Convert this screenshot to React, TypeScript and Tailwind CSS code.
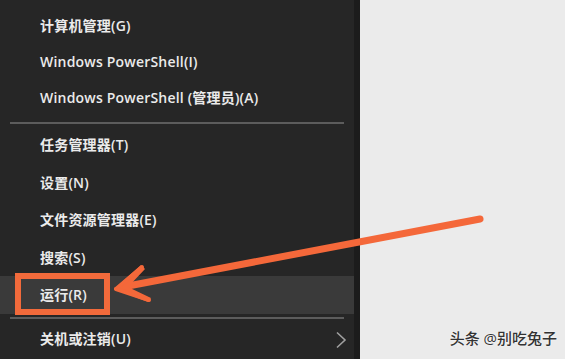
import React from 'react'

const font = { fontFamily: '"Open Sans", "Noto Sans CJK SC", sans-serif' }

function Item({ label, active = false, h = 'h-[37.5px]' }: { label: string; active?: boolean; h?: string }) {
  return (
    <div className={`flex items-center pl-10 text-[14px] font-semibold tracking-[0.2px] text-[#ebebeb] ${h} ${active ? 'bg-[#3a3a3a]' : ''}`}>
      {label}
    </div>
  )
}

function Divider({ className = '' }: { className?: string }) {
  return <div className={`mx-[10px] h-[2px] bg-[#5c5c5c] ${className}`} />
}

export default function App() {
  return (
    <div className="relative flex h-[359px] w-[565px] overflow-hidden bg-[#ebebeb]" style={font}>
      {/* context menu */}
      <div className="flex w-[360px] flex-col border-r-[6px] border-[#1c1c1c] bg-[#262626] pt-[7px]">
        <Item label="计算机管理(G)" h="h-[36px]" />
        <Item label="Windows PowerShell(I)" h="h-[36px]" />
        <Item label="Windows PowerShell (管理员)(A)" h="h-[36px]" />
        <Divider className="mt-[7px]" />
        <div className="mt-[2px]">
          <Item label="任务管理器(T)" />
          <Item label="设置(N)" />
          <Item label="文件资源管理器(E)" />
          <Item label="搜索(S)" />
          <Item label="运行(R)" active />
        </div>
        <Divider className="mt-[3px]" />
        <div className="relative">
          <Item label="关机或注销(U)" h="h-[40px]" />
          <svg className="absolute right-[7px] top-[12px]" width="12" height="18" viewBox="0 0 12 18">
            <polyline points="2,1.5 10,9 2,16.5" fill="none" stroke="#a0a0a0" strokeWidth="1.6" />
          </svg>
        </div>
      </div>
      <div className="flex-1" />

      {/* annotation */}
      <svg className="pointer-events-none absolute inset-0" width="565" height="359" viewBox="0 0 565 359">
        <rect x="18" y="276" width="89" height="36" fill="none" stroke="#f26a3b" strokeWidth="6" />
        <line x1="480" y1="219" x2="128" y2="286" stroke="#f4683a" strokeWidth="7" strokeLinecap="round" />
        <polygon points="114,289 141,265 145,269 128,287 151,298 148,302" fill="#f4683a" />
        <line x1="116" y1="289" x2="142" y2="267" stroke="#f4683a" strokeWidth="4" strokeLinecap="round" />
        <line x1="116" y1="289" x2="149" y2="300" stroke="#f4683a" strokeWidth="4" strokeLinecap="round" />
      </svg>

      <div className="absolute right-[8px] bottom-[10px] text-[15px] font-medium text-[#333] [text-shadow:0_0_2px_#fff]">
        头条 @别吃兔子
      </div>
    </div>
  )
}
